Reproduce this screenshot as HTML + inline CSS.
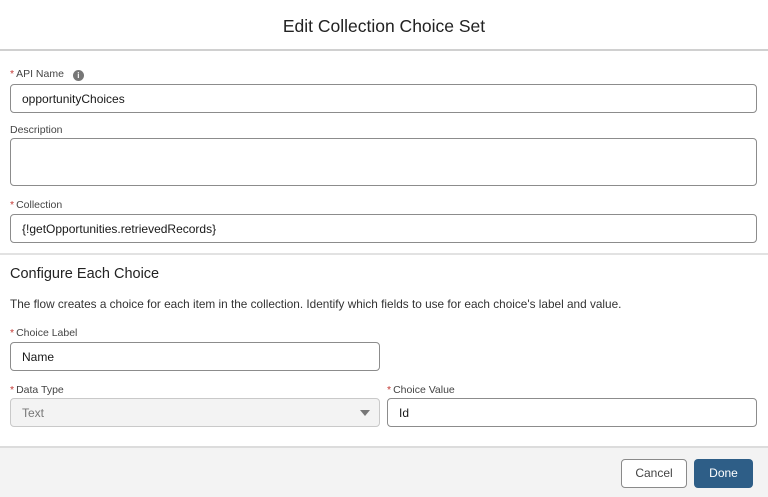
<!DOCTYPE html>
<html><head><style>
*{box-sizing:border-box;margin:0;padding:0}
body{width:768px;height:497px;background:#fff;font-family:"Liberation Sans",sans-serif;color:#181818;position:relative;overflow:hidden;font-size:12px}
.a{position:absolute}
.lbl{font-size:10.5px;color:#444}
.lbl b{color:#c23934;font-weight:normal;margin-right:2px}
.inp{border:1px solid #8c8c8c;border-radius:4px;background:#fff;font-size:12px;padding-left:11px;display:flex;align-items:center}
</style></head><body>
<div class="a" style="left:0;top:0;width:768px;height:51px;border-bottom:2px solid #d0d0d0;text-align:center;line-height:52px;font-size:17.5px;color:#222">Edit Collection Choice Set</div>
<div class="a lbl" style="left:10px;top:68px"><b>*</b>API Name <span style="display:inline-block;width:11px;height:11px;border-radius:50%;background:#777;color:#fff;font-size:8px;text-align:center;line-height:11px;font-weight:bold;margin-left:6px;vertical-align:-1px">i</span></div>
<div class="a inp" style="left:10px;top:84px;width:747px;height:29px">opportunityChoices</div>
<div class="a lbl" style="left:10px;top:124px">Description</div>
<div class="a inp" style="left:10px;top:138px;width:747px;height:48px"></div>
<div class="a lbl" style="left:10px;top:199px"><b>*</b>Collection</div>
<div class="a inp" style="left:10px;top:214px;width:747px;height:29px">{!getOpportunities.retrievedRecords}</div>
<div class="a" style="left:0;top:253px;width:768px;height:2px;background:#e2e2e2"></div>
<div class="a" style="left:10px;top:266px;font-size:14.5px;color:#222">Configure Each Choice</div>
<div class="a" style="left:10px;top:297px;font-size:11.8px;color:#333">The flow creates a choice for each item in the collection. Identify which fields to use for each choice's label and value.</div>
<div class="a lbl" style="left:10px;top:327px"><b>*</b>Choice Label</div>
<div class="a inp" style="left:10px;top:342px;width:370px;height:29px">Name</div>
<div class="a lbl" style="left:10px;top:384px"><b>*</b>Data Type</div>
<div class="a inp" style="left:10px;top:398px;width:370px;height:29px;background:#f3f3f3;border-color:#c9c9c9;color:#777">Text<span style="position:absolute;right:9px;top:11px;width:0;height:0;border-left:5px solid transparent;border-right:5px solid transparent;border-top:6px solid #777"></span></div>
<div class="a lbl" style="left:387px;top:384px"><b>*</b>Choice Value</div>
<div class="a inp" style="left:387px;top:398px;width:370px;height:29px">Id</div>
<div class="a" style="left:0;top:446px;width:768px;height:51px;background:#f3f3f3;border-top:2px solid #dcdcdc"></div>
<div class="a" style="left:621px;top:459px;width:66px;height:29px;border:1px solid #8a8a8a;border-radius:4px;background:#fff;color:#444;text-align:center;line-height:27px;font-size:12px">Cancel</div>
<div class="a" style="left:694px;top:459px;width:59px;height:29px;border-radius:4px;background:#2e5e87;color:#fff;text-align:center;line-height:29px;font-size:12px">Done</div>
</body></html>
